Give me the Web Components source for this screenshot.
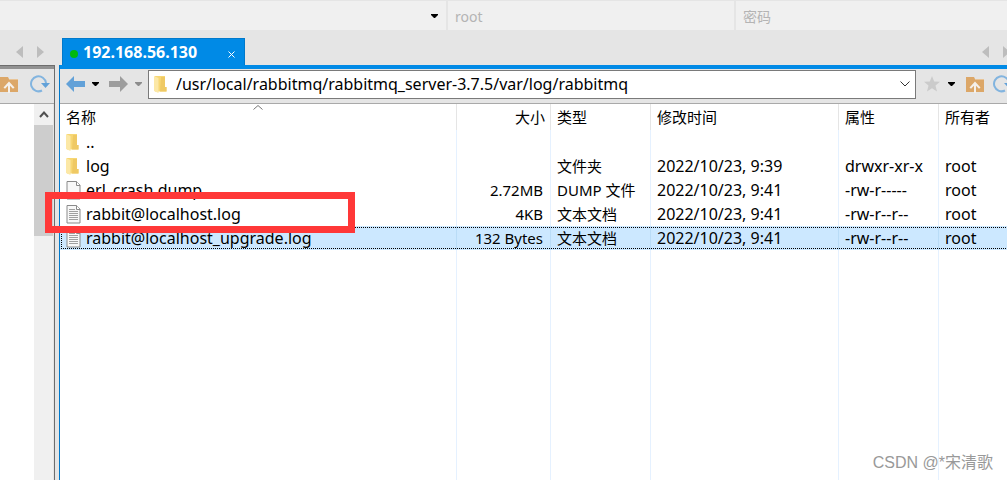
<!DOCTYPE html>
<html lang="zh-CN">
<head>
<meta charset="utf-8">
<title>192.168.56.130</title>
<style>
  body {
    margin: 0;
    font: 16px/24px "Noto Sans", "Noto Sans CJK SC", sans-serif;
    color: #000;
    background: #e5e5e5;
  }
</style>
</head>
<body>
<ftp-window></ftp-window>
<script>
const base = `
  * { box-sizing: border-box; }
  button { padding: 0; border: 0; background: none; font: inherit; color: inherit; display: flex; align-items: center; justify-content: center; flex: none; }
  input { min-width: 0; margin: 0; padding: 0; border: 0; outline: 0; background: none; font: inherit; color: inherit; }
  svg { display: block; }
`

const icons = {
  prev: '<svg width="7" height="12"><path d="M7 0v12L0 6z" fill="#bdbdbd"/></svg>',
  next: '<svg width="7" height="12"><path d="M0 0v12L7 6z" fill="#bdbdbd"/></svg>',
  back: '<svg width="20" height="16"><path d="M0 8L8 0v5h11v6H8v5z" fill="#62a1d8"/></svg>',
  forward: '<svg width="20" height="16"><path d="M19 8L11 0v5H0v6h11v5z" fill="#9d9d9d"/></svg>',
  drop: '<svg width="7" height="4"><path d="M0 0h7v1L4 4H3L0 1z" fill="#000"/></svg>',
  dropOff: '<svg width="7" height="4"><path d="M0 0h7v1L4 4H3L0 1z" fill="#8c8c8c"/></svg>',
  chevron: '<svg width="10" height="6"><path d="M.5.5L5 5 9.500.5" fill="none" stroke="#333"/></svg>',
  up: '<svg width="10" height="7"><path d="M1 6l4-4.500L9 6" fill="none" stroke="#505050" stroke-width="2"/></svg>',
  star: '<svg width="16" height="16"><path d="M8 0l2.200 5.400 5.800.4-4.500 3.700L13 15.500l-5-3.200-5 3.200 1.500-6L0 5.800l5.800-.4z" fill="#cbcbcb"/></svg>',
  parent: '<svg width="19" height="17"><path d="M0 1h8l1 2h9v13H0z" fill="#dca768"/><path d="M9 3h9v1H9z" fill="#e9c496"/><path d="M9 5.500l5.500 6-1.500 1.300-3-3V17H8V9.800l-3 3-1.500-1.300z" fill="#f5f0ea"/></svg>',
  refresh: '<svg width="20" height="18"><path d="M12 15.500A7.500 7.500 0 1 1 16 8" fill="none" stroke="#82b4df" stroke-width="2"/><path d="M11 8h9l-4.500 5z" fill="#62a1d8"/></svg>',
  folder: '<svg width="13" height="17"><path d="M1 0h10v11h1.500v4.500H1z" fill="#f7d774"/><path d="M7 1h4v10h1.500v4.500H6z" fill="#efc964"/><path d="M0 0l4.500 2v15L0 15z" fill="#fce8a6"/></svg>',
  file: '<svg width="15" height="19"><path d="M1 .5h9.500L14 4v14H1z" fill="#f8f8f8" stroke="#8a8a8a"/><path d="M10.500.5V4.500H14" fill="#fff" stroke="#8a8a8a"/></svg>',
  text: '<svg width="15" height="19"><path d="M1 .5h9.500L14 4v14H1z" fill="#f8f8f8" stroke="#8a8a8a"/><path d="M10.500.5V4.500H14" fill="#fff" stroke="#8a8a8a"/><path d="M3 4.500h6M3 6.500h9M3 8.500h9M3 10.500h9M3 12.500h9M3 14.500h9" stroke="#a0a0a0"/></svg>',
  close: '<svg width="7" height="7"><path d="M.5.5l6 6M6.500.5l-6 6" stroke="#fff"/></svg>',
  sort: '<svg width="10" height="5"><path d="M.5 4.500L5 .5l4.500 4" fill="none" stroke="#777"/></svg>'
}

class UiElement extends HTMLElement {
  constructor () {
    super()
    const t = document.createElement('template')
    t.innerHTML = `<style>${base}${this.css}</style>${this.html}`
    this.attachShadow({mode: 'open'}).appendChild(t.content.cloneNode(true))
  }
}

class QuickConnect extends UiElement {
  get css () {
    return `
      :host { display: grid; grid-template-columns: 446fr 286fr 271fr; gap: 2px; padding-top: 1px; height: 30px; font-size: 14px; line-height: 20px; }
      div { display: flex; min-width: 0; background: #f0f0f0; padding: 0 8px; }
      div:nth-child(n + 3) { padding: 0 7px; }
      input { flex: 1; padding-top: 2px; }
      input::placeholder { color: #b4b4b4; opacity: 1; }
    `
  }

  get html () {
    return `
      <div><input aria-label="主机"><button aria-label="主机列表">${icons.drop}</button></div>
      <div><input aria-label="用户" placeholder="root"></div>
      <div><input aria-label="密码" placeholder="密码"></div>
    `
  }
}

class TabStrip extends UiElement {
  get css () {
    return `
      :host { display: flex; align-items: flex-end; height: 35px; padding-left: 3px; }
      .arrows { display: flex; gap: 14px; height: 27px; margin-left: auto; }
    `
  }

  get html () {
    return `
      <slot></slot>
      <div class="arrows">
        <button aria-label="上一个">${icons.prev}</button>
        <button aria-label="下一个">${icons.next}</button>
      </div>
    `
  }
}

class SessionTab extends UiElement {
  get css () {
    return `
      :host { display: flex; align-items: center; gap: 5px; width: 183px; height: 27px; padding: 0 9px 0 7px; background: #008ae6; border: 1px solid #0079cb; border-bottom: 0; color: #fff; font-weight: bold; }
      i { width: 8px; height: 8px; margin-top: 3px; border-radius: 50%; background: #00b90f; }
      span { flex: 1; }
      button { height: 27px; padding-top: 4px; }
    `
  }

  get html () {
    return `<i></i><span><slot></slot></span><button aria-label="关闭">${icons.close}</button>`
  }
}

class ToolBar extends UiElement {
  get css () {
    return `
      :host { display: flex; align-items: center; height: 35px; padding-bottom: 4px; border-bottom: 1px solid #a9a9a9; overflow: hidden; }
    `
  }

  get html () {
    return '<slot></slot>'
  }
}

class IconButton extends UiElement {
  get css () {
    return `
      :host { display: block; flex: none; }
    `
  }

  get html () {
    const name = this.getAttribute('icon')
    return `<button aria-label="${this.getAttribute('label')}">${icons[name]}</button>`
  }
}

class PathBox extends UiElement {
  get css () {
    return `
      :host { display: flex; align-items: center; flex: 1; min-width: 0; height: 29px; padding: 0 5px; background: #fff; border: 1px solid #7a7a7a; }
      input { flex: 1; height: 24px; margin-left: 9px; }
    `
  }

  get html () {
    return `
      ${icons.folder}
      <input aria-label="路径" value="${this.getAttribute('path')}">
      <button aria-label="历史路径">${icons.chevron}</button>
    `
  }
}

class SidePane extends UiElement {
  get css () {
    return `
      :host { display: flex; flex-direction: column; width: 55px; flex: none; }
      tab-strip { padding-right: 11px; }
      .frame { display: flex; flex-direction: column; flex: 1; border-top: 1px solid #6d6d6d; border-right: 1px solid #6d6d6d; }
      .line { height: 3px; background: #919191; }
      tool-bar { gap: 11px; }
      .list { display: flex; flex: 1; justify-content: flex-end; background: #fff; }
      .scroll { width: 20px; background: #f0f0f0; border-right: 1px solid #e5e5e5; }
      .scroll button { width: 100%; height: 21px; }
      .thumb { height: 111px; background: #cdcdcd; }
    `
  }

  get html () {
    return `
      <tab-strip></tab-strip>
      <div class="frame">
        <div class="line"></div>
        <tool-bar>
          <icon-button icon="parent" label="上级目录"></icon-button>
          <icon-button icon="refresh" label="刷新"></icon-button>
        </tool-bar>
        <div class="list">
          <div class="scroll">
            <button aria-label="向上滚动">${icons.up}</button>
            <div class="thumb"></div>
          </div>
        </div>
      </div>
    `
  }
}

const files = [
  {icon: 'folder', name: '..'},
  {icon: 'folder', name: 'log', type: '文件夹', date: '2022/10/23, 9:39', mode: 'drwxr-xr-x', owner: 'root'},
  {icon: 'file', name: 'erl_crash.dump', size: '2.72MB', type: 'DUMP 文件', date: '2022/10/23, 9:41', mode: '-rw-r-----', owner: 'root'},
  {icon: 'text', name: 'rabbit@localhost.log', size: '4KB', type: '文本文档', date: '2022/10/23, 9:41', mode: '-rw-r--r--', owner: 'root'},
  {icon: 'text', name: 'rabbit@localhost_upgrade.log', size: '132 Bytes', type: '文本文档', date: '2022/10/23, 9:41', mode: '-rw-r--r--', owner: 'root', selected: true}
]

class FileList extends UiElement {
  get css () {
    return `
      :host { display: block; flex: 1; min-height: 0; background: #fff; overflow: hidden; }
      table { width: calc(100% + 2px); height: 100%; table-layout: fixed; border-spacing: 0; }
      .c-name { width: 397px; }
      .c-size { width: 94px; }
      .c-type { width: 100px; }
      .c-date { width: 188px; }
      .c-mode { width: 100px; }
      th, td { height: 24px; padding: 0 0 0 6px; border-right: 1px solid #e5f1ff; text-align: left; font-weight: normal; white-space: nowrap; overflow: hidden; }
      th { height: 26px; border-color: #e5e5e5; position: relative; }
      th, td:nth-child(2), td:nth-child(3) { font-size: 15px; }
      th:last-child, td:last-child { border-right: 0; }
      th:nth-child(2) { text-align: right; padding-right: 5px; }
      td:nth-child(2) { text-align: right; padding-right: 7px; }
      th svg { position: absolute; top: 1px; left: 50%; margin-left: -5px; }
      .name { display: flex; align-items: center; gap: 5px; }
      .name i { width: 15px; }
      .selected { background: #cce8ff; outline: 1px dotted #000; outline-offset: -2px; }
      .selected td { border-color: #b9dcf7; }
      .rest td { height: auto; }
    `
  }

  get html () {
    const row = f => `
      <tr class="${f.selected ? 'selected' : ''}">
        <td><div class="name"><i>${icons[f.icon]}</i>${f.name}</div></td>
        <td>${f.size || ''}</td>
        <td>${f.type || ''}</td>
        <td>${f.date || ''}</td>
        <td>${f.mode || ''}</td>
        <td>${f.owner || ''}</td>
      </tr>`
    return `
      <table>
        <colgroup><col class="c-name"><col class="c-size"><col class="c-type"><col class="c-date"><col class="c-mode"><col></colgroup>
        <thead>
          <tr><th>${icons.sort}名称</th><th>大小</th><th>类型</th><th>修改时间</th><th>属性</th><th>所有者</th></tr>
        </thead>
        <tbody>
          ${files.map(row).join('')}
          <tr class="rest"><td></td><td></td><td></td><td></td><td></td><td></td></tr>
        </tbody>
      </table>
    `
  }
}

class RemotePane extends UiElement {
  get css () {
    return `
      :host { display: flex; flex-direction: column; flex: 1; min-width: 0; }
      .frame { display: flex; flex-direction: column; flex: 1; min-height: 0; border-left: 1px solid #0079cb; }
      .line { height: 4px; background: #008ae6; }
      tool-bar { padding-left: 6px; }
      .nav, .extra { display: flex; align-items: center; flex: none; }
      .nav { gap: 6px; width: 82px; }
      .nav icon-button:nth-child(3) { margin-left: 4px; }
      .extra { gap: 8px; width: 91px; padding-left: 8px; overflow: hidden; }
      .extra icon-button:nth-child(3) { margin-left: 3px; }
      tab-strip { margin-right: -3px; }
    `
  }

  get html () {
    return `
      <tab-strip><session-tab>192.168.56.130</session-tab></tab-strip>
      <div class="frame">
        <div class="line"></div>
        <tool-bar>
          <div class="nav">
            <icon-button icon="back" label="后退"></icon-button>
            <icon-button icon="drop" label="后退历史"></icon-button>
            <icon-button icon="forward" label="前进"></icon-button>
            <icon-button icon="dropOff" label="前进历史"></icon-button>
          </div>
          <path-box path="/usr/local/rabbitmq/rabbitmq_server-3.7.5/var/log/rabbitmq"></path-box>
          <div class="extra">
            <icon-button icon="star" label="书签"></icon-button>
            <icon-button icon="drop" label="书签列表"></icon-button>
            <icon-button icon="parent" label="上级目录"></icon-button>
            <icon-button icon="refresh" label="刷新"></icon-button>
          </div>
        </tool-bar>
        <file-list></file-list>
      </div>
    `
  }
}

class FtpWindow extends UiElement {
  get css () {
    return `
      :host { display: flex; flex-direction: column; position: relative; height: 100vh; overflow: hidden; }
      .panes { display: flex; gap: 4px; flex: 1; min-height: 0; }
      .mark { position: absolute; left: 45px; top: 192px; width: 310px; height: 41px; border: 7px solid #ff3838; }
      .credit { position: absolute; right: 14px; bottom: 5px; font: 16px/24px "Liberation Sans", "Noto Sans CJK SC", sans-serif; color: #999; }
    `
  }

  get html () {
    return `
      <quick-connect></quick-connect>
      <div class="panes">
        <side-pane></side-pane>
        <remote-pane></remote-pane>
      </div>
      <div class="mark"></div>
      <div class="credit">CSDN @*宋清歌</div>
    `
  }
}

customElements.define('quick-connect', QuickConnect)
customElements.define('tab-strip', TabStrip)
customElements.define('session-tab', SessionTab)
customElements.define('tool-bar', ToolBar)
customElements.define('icon-button', IconButton)
customElements.define('path-box', PathBox)
customElements.define('side-pane', SidePane)
customElements.define('file-list', FileList)
customElements.define('remote-pane', RemotePane)
customElements.define('ftp-window', FtpWindow)
</script>
</body>
</html>
